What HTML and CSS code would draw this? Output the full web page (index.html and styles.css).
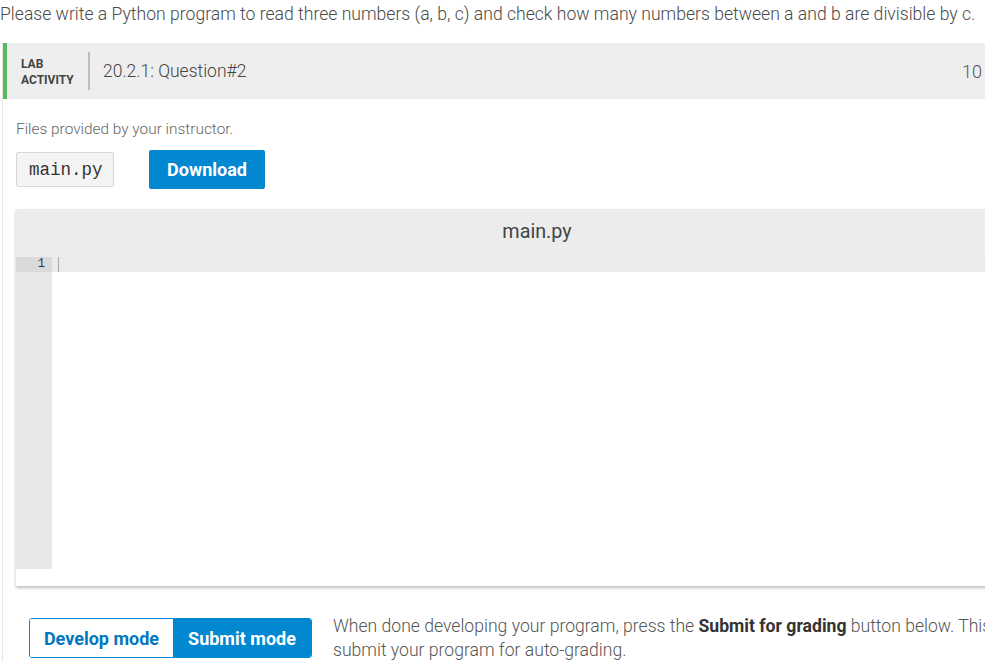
FILE: index.html
```html
<!DOCTYPE html>
<html>
<head>
<meta charset="utf-8">
<link rel="stylesheet" href="styles.css">
</head>
<body>
<p class="prompt">Please write a Python program to read three numbers (a, b, c) and check how many numbers between a and b are divisible by c.</p>
<div class="activity">
  <div class="act-header">
    <div class="act-label">LAB<br>ACTIVITY</div>
    <div class="act-divider"></div>
    <div class="act-title">20.2.1: Question#2</div>
    <div class="act-score">10 <span class="score-mark">/ 10</span></div>
  </div>
  <div class="act-body">
    <div class="files-note">Files provided by your instructor.</div>
    <div class="files-row">
      <span class="file-chip">main.py</span>
      <button class="btn-download">Download</button>
    </div>
    <div class="editor">
      <div class="editor-head">main.py</div>
      <div class="editor-main">
        <div class="gutter">
          <div class="line-no">1</div>
        </div>
        <div class="code">
          <div class="active-line"><span class="cursor"></span></div>
        </div>
      </div>
      <div class="editor-foot"></div>
    </div>
    <div class="mode-row">
      <div class="toggle">
        <button class="mode mode-dev">Develop mode</button>
        <button class="mode mode-submit">Submit mode</button>
      </div>
      <p class="mode-text">When done developing your program, press the <b>Submit for grading</b> button below. This will submit your program for auto-grading.</p>
    </div>
  </div>
</div>
</body>
</html>
```
FILE: styles.css
```css
html, body {
  margin: 0;
  padding: 0;
  background: #fff;
  overflow: hidden;
  width: 985px;
  height: 666px;
}
body {
  font-family: Roboto, "Liberation Sans", sans-serif;
  color: #555;
}
.prompt {
  margin: 0;
  padding: 2px 0 0 0;
  font-size: 17.6px;
  font-weight: 300;
  line-height: 24px;
  color: #4a4a4a;
  white-space: nowrap;
}
.activity {
  margin-top: 17px;
  margin-left: 2px;
  width: 1060px;
  border-left: 1px solid #e6e6e6;
}
.act-header {
  display: flex;
  align-items: center;
  height: 56px;
  background: #eeeeee;
  border-left: 4px solid #5cb85c;
  box-sizing: border-box;
}
.act-label {
  font-size: 12px;
  font-weight: 700;
  line-height: 16px;
  color: #444;
  padding-left: 14px;
  width: 67px;
  margin-top: 2px;
}
.act-divider {
  width: 2px;
  height: 38px;
  background: #bdbdbd;
}
.act-title {
  font-size: 17.5px;
  font-weight: 300;
  color: #444;
  margin-left: 13px;
  flex: 1;
}
.act-score {
  font-size: 18px;
  font-weight: 300;
  color: #555;
  width: 101px;
  white-space: nowrap;
}
.score-mark {
  color: #f0a020;
}
.act-body {
  padding: 21px 0 0 13px;
}
.files-note {
  font-size: 15.4px;
  font-weight: 300;
  color: #666;
  line-height: 18px;
}
.files-row {
  display: flex;
  align-items: center;
  margin-top: 12px;
  gap: 35px;
}
.file-chip {
  display: inline-block;
  font-family: "Liberation Mono", "Courier New", monospace;
  font-size: 17.5px;
  color: #333;
  background: #f4f4f4;
  border: 1px solid #d8d8d8;
  border-radius: 2px;
  padding: 0 0 0 12px;
  height: 35px;
  line-height: 34px;
  box-sizing: border-box;
  width: 98px;
  margin-top: -1px;
}
.btn-download {
  font-family: Roboto, "Liberation Sans", sans-serif;
  font-size: 18px;
  font-weight: 700;
  color: #fff;
  background: #0288d1;
  border: none;
  border-radius: 2px;
  width: 116px;
  height: 39px;
  padding: 0;
}
.editor {
  margin-top: 20px;
  width: 1042px;
  box-shadow: 0 2px 3px rgba(0,0,0,0.25);
  background: #fff;
}
.editor-head {
  height: 48px;
  background: #ececec;
  text-align: center;
  font-size: 19.8px;
  font-weight: 400;
  color: #444;
  line-height: 46px;
}
.editor-main {
  display: flex;
  height: 312px;
}
.gutter {
  width: 36px;
  background: #e8e8e8;
}
.line-no {
  height: 15px;
  background: #dadada;
  font-family: "Liberation Mono", monospace;
  font-size: 12px;
  line-height: 15px;
  color: #223366;
  text-align: right;
  padding-right: 7px;
}
.code {
  flex: 1;
}
.active-line {
  height: 15px;
  background: #ebebeb;
  padding-left: 6px;
}
.cursor {
  display: inline-block;
  width: 1px;
  height: 15px;
  background: #aaa;
  vertical-align: top;
}
.editor-foot {
  height: 17px;
}
.mode-row {
  display: flex;
  align-items: flex-start;
  margin-top: 31px;
  padding-left: 13px;
}
.toggle {
  display: flex;
  flex-shrink: 0;
  margin-top: 1px;
  border: 1px solid #0288d1;
  border-radius: 3px;
  overflow: hidden;
}
.mode {
  font-family: Roboto, "Liberation Sans", sans-serif;
  font-size: 18px;
  font-weight: 700;
  height: 38px;
  border: none;
  padding: 0;
}
.mode-dev {
  width: 143px;
  background: #fff;
  color: #0277bd;
}
.mode-submit {
  width: 138px;
  background: #0288d1;
  color: #fff;
}
.mode-text {
  margin: -3px 0 0 21px;
  font-size: 17.6px;
  font-weight: 300;
  line-height: 24px;
  color: #555;
  width: 705px;
  flex-shrink: 0;
}
.mode-text b {
  font-weight: 700;
  color: #333;
}
```
